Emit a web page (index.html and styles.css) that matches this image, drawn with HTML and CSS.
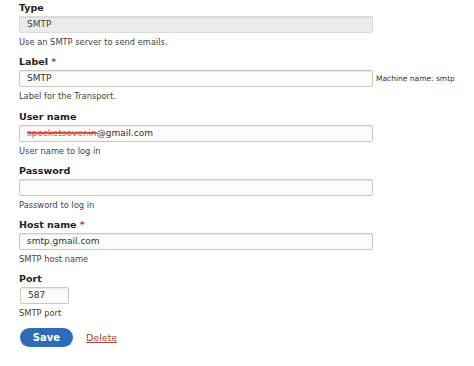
FILE: index.html
```html
<!DOCTYPE html>
<html lang="en">
<head>
  <meta charset="UTF-8">
  <title>SMTP Transport</title>
  <link rel="stylesheet" href="styles.css">
</head>
<body>
  <form class="transport-form">
    <!-- Type -->
    <div class="field">
      <label class="field-label">Type</label>
      <div class="input input-disabled">SMTP</div>
      <p class="field-desc">Use an SMTP server to send emails.</p>
    </div>

    <!-- Label -->
    <div class="field">
      <label class="field-label">Label <span class="required">*</span></label>
      <div class="input-row">
        <div class="input">SMTP</div>
        <span class="machine-name">Machine name: smtp</span>
      </div>
      <p class="field-desc">Label for the Transport.</p>
    </div>

    <!-- User name -->
    <div class="field">
      <label class="field-label">User name</label>
      <div class="input"><span class="redacted">spocketsaver.in</span>@gmail.com</div>
      <p class="field-desc">User name to log in</p>
    </div>

    <!-- Password -->
    <div class="field">
      <label class="field-label">Password</label>
      <div class="input"></div>
      <p class="field-desc">Password to log in</p>
    </div>

    <!-- Host name -->
    <div class="field">
      <label class="field-label">Host name <span class="required">*</span></label>
      <div class="input">smtp.gmail.com</div>
      <p class="field-desc">SMTP host name</p>
    </div>

    <!-- Port -->
    <div class="field">
      <label class="field-label">Port</label>
      <div class="input input-small">587</div>
      <p class="field-desc">SMTP port</p>
    </div>

    <div class="actions">
      <button type="button" class="button">Save</button>
      <a href="#" class="delete-link">Delete</a>
    </div>
  </form>
</body>
</html>
```

FILE: styles.css
```css
body {
  font-family: "DejaVu Sans", Verdana, sans-serif;
  background-color: #fff;
  margin: 0;
  padding: 2px 0 0 19px;
  color: #333;
}
.field {
  margin-bottom: 8.3px;
}
.field-label {
  display: block;
  font-size: 9.5px;
  font-weight: bold;
  line-height: 12px;
  color: #222;
}
.required {
  color: #c8382e;
}
.input-row {
  display: flex;
  align-items: center;
}
.input {
  box-sizing: border-box;
  width: 354px;
  height: 17px;
  margin-top: 2px;
  padding: 0 7px;
  border: 1px solid #c8c8c8;
  border-radius: 2px;
  background-color: #fcfcfa;
  box-shadow: inset 0 1px 1px rgba(0, 0, 0, 0.08);
  font-size: 9px;
  line-height: 15px;
  color: #333;
}
.input-disabled {
  background-color: #ebebeb;
  border-color: #dcdcdc;
  color: #444;
}
.input-small {
  width: 49px;
  margin-left: 1px;
}
.machine-name {
  margin-left: 3px;
  margin-top: 2px;
  font-size: 7.5px;
  color: #333;
}
.redacted {
  color: #e0503a;
  text-decoration: line-through;
  text-decoration-thickness: 2px;
  text-decoration-color: #e0503a;
}
.field-desc {
  margin: 3px 0 0;
  font-size: 8.3px;
  line-height: 12px;
  color: #444;
}
.actions {
  display: flex;
  align-items: center;
  gap: 13px;
  margin-top: 9px;
  padding-left: 1px;
}
.button {
  width: 53px;
  height: 19px;
  padding: 0;
  font-family: inherit;
  font-size: 10px;
  font-weight: bold;
  background-color: #2e6cb9;
  color: white;
  border: none;
  border-radius: 10px;
  cursor: pointer;
}
.delete-link {
  font-size: 9.5px;
  color: #a8432f;
  text-decoration: underline;
}
```
